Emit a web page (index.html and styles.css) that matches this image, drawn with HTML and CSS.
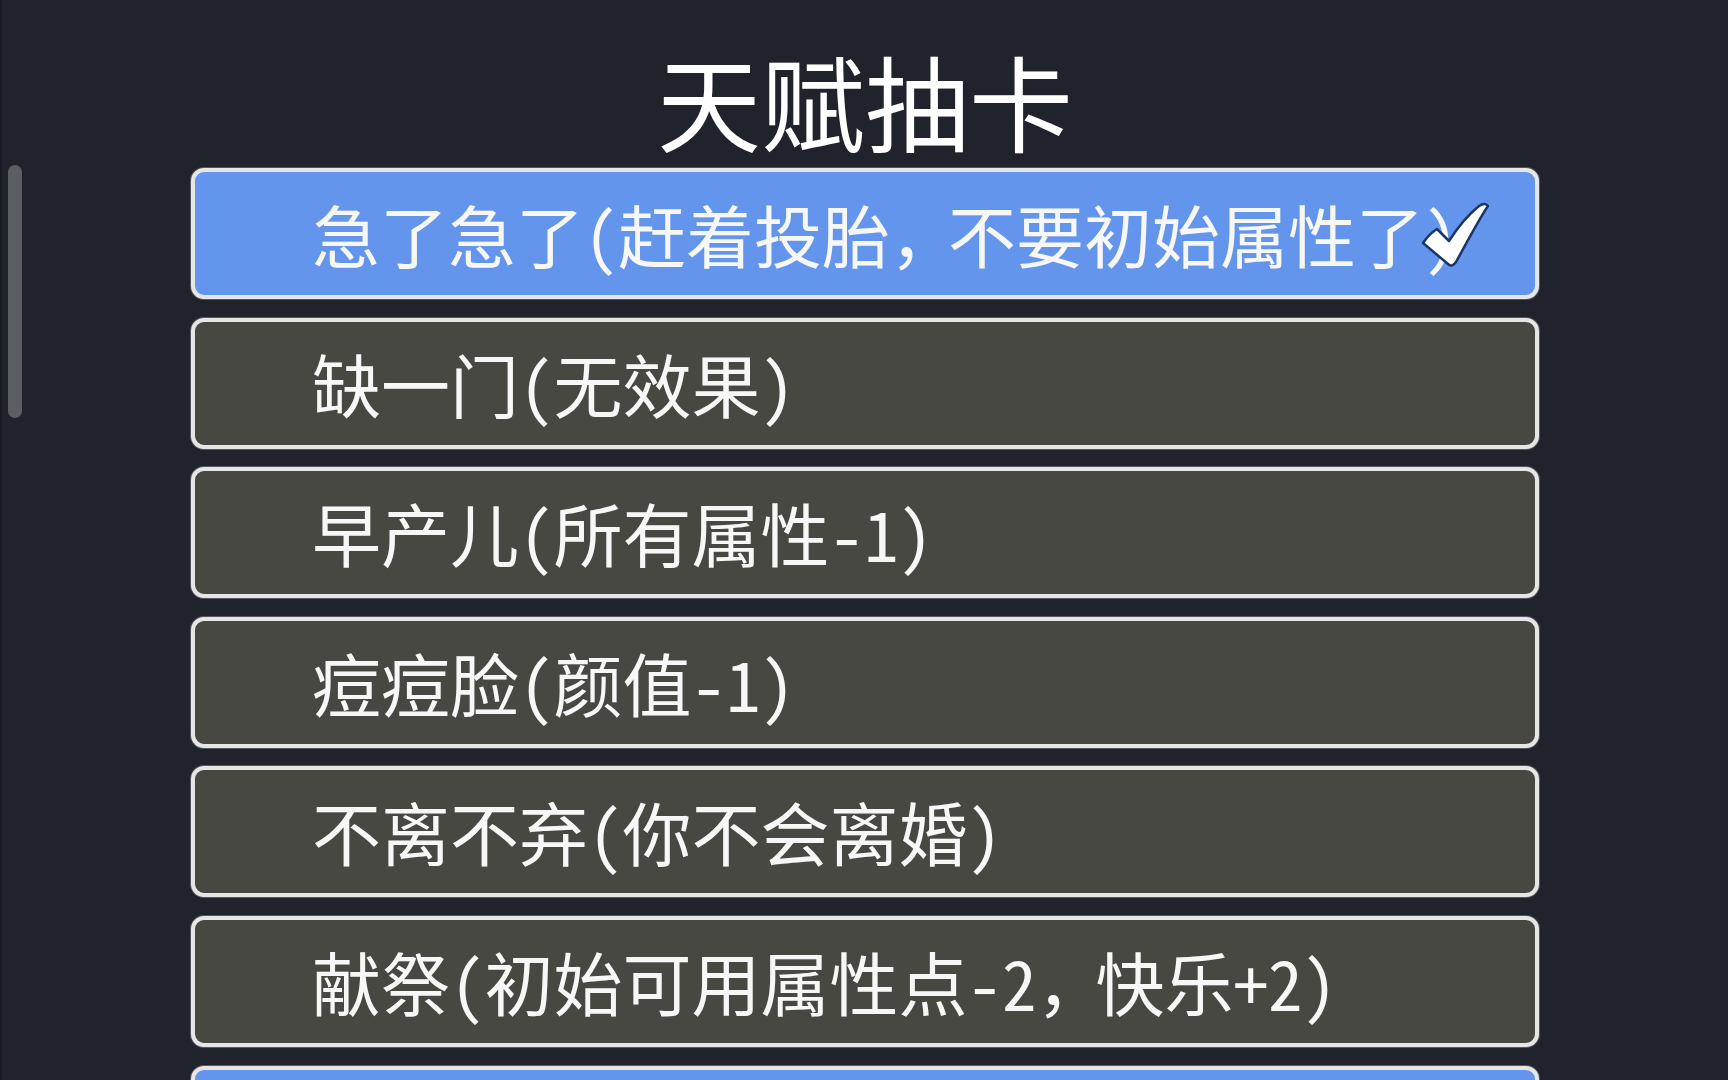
FILE: index.html
```html
<!DOCTYPE html>
<html lang="zh-CN">
<head>
<meta charset="utf-8">
<title>天赋抽卡</title>
<link rel="stylesheet" href="styles.css">
</head>
<body>
<div class="scrollbar"></div>
<main class="page">
  <h1 class="title">天赋抽卡</h1>
  <ul class="cards">
    <li class="card selected">
      <span class="label long">急了急了(赶着投胎<span class="fw">，</span>不要初始属性了)</span>
      <svg class="check" viewBox="0 0 68 66" width="68" height="66" aria-hidden="true">
        <path d="M2 41 Q8 32 16 27 L28 39 Q42 17 58 4 Q64 0 67 4 Q60 14 35 60 Q31 66 27 62 Z" fill="#ffffff" stroke="#1c3566" stroke-width="2.5" stroke-linejoin="round"/>
      </svg>
    </li>
    <li class="card"><span class="label">缺一门(无效果)</span></li>
    <li class="card"><span class="label">早产儿(所有属性-1)</span></li>
    <li class="card"><span class="label">痘痘脸(颜值-1)</span></li>
    <li class="card"><span class="label">不离不弃(你不会离婚)</span></li>
    <li class="card"><span class="label">献祭(初始可用属性点-2<span class="fw">，</span>快乐+2)</span></li>
    <li class="card selected"><span class="label"></span></li>
  </ul>
</main>
</body>
</html>
```

FILE: styles.css
```css
html, body {
  margin: 0;
  padding: 0;
  height: 100%;
  overflow: hidden;
}

body {
  background: #20232c;
  font-family: "Noto Sans CJK SC", "Noto Sans", sans-serif;
  color: #f7f7f7;
  border-left: 2px solid #191c22;
  box-sizing: border-box;
}

.scrollbar {
  position: absolute;
  left: 8px;
  top: 165px;
  width: 14px;
  height: 253px;
  border-radius: 7px;
  background: #5a6062;
}

.page {
  display: flex;
  flex-direction: column;
  align-items: center;
}

.title {
  margin: 32px 0 0;
  height: 136px;
  line-height: 136px;
  font-size: 104px;
  font-weight: 400;
  color: #ffffff;
}

.cards {
  list-style: none;
  margin: 0;
  padding: 0;
  display: flex;
  flex-direction: column;
  gap: 18.6px;
  width: 1348px;
}

.card {
  position: relative;
  box-sizing: border-box;
  height: 131px;
  flex: 0 0 auto;
  display: flex;
  align-items: center;
  padding-left: 117px;
  background: #474842;
  border: 4px solid #e6e6e6;
  border-radius: 13px;
  box-shadow: 0 0 0 1px rgba(150, 150, 150, 0.45);
}

.card.selected {
  background: #6495ed;
}

.label {
  font-size: 69px;
  line-height: 1;
  white-space: nowrap;
  color: #f7f7f7;
  font-feature-settings: "hwid" 1;
}

.label.long {
  font-size: 68px;
}

.fw {
  font-feature-settings: normal;
  letter-spacing: -10px;
}

.check {
  position: absolute;
  left: 1226px;
  top: 30px;
}
```
